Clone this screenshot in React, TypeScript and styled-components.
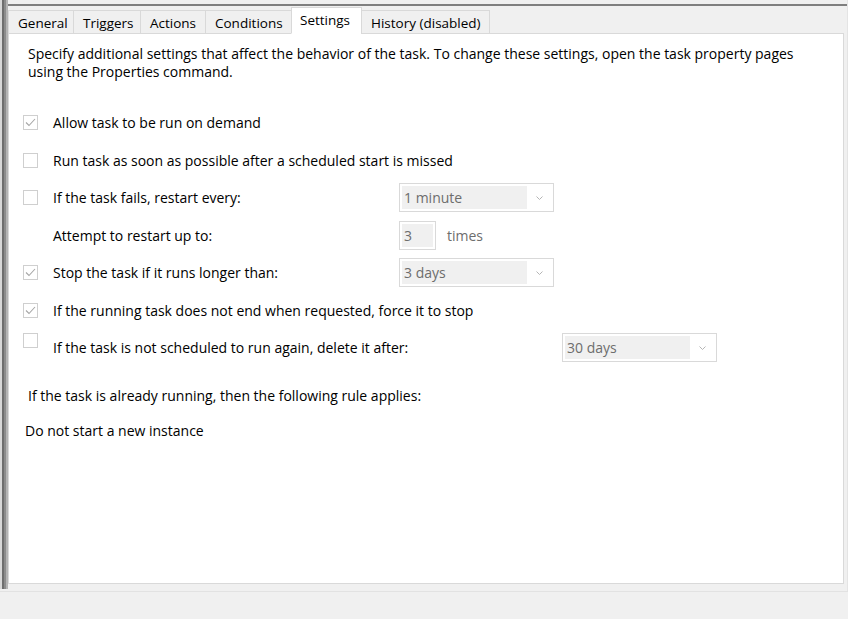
import React from 'react';
import styled, { createGlobalStyle } from 'styled-components';

const GlobalStyle = createGlobalStyle`
  html, body {
    margin: 0;
    padding: 0;
    background: #f0f0f0;
    overflow: hidden;
  }
  * {
    box-sizing: border-box;
  }
`;

const FONT = `"Open Sans", "Noto Sans", "Liberation Sans", sans-serif`;

const Window = styled.div`
  width: 848px;
  height: 619px;
  display: flex;
  flex-direction: column;
  background: #f0f0f0;
  font-family: ${FONT};
  font-size: 14px;
  color: #000;
`;

const Body = styled.div`
  display: flex;
  height: 592px;
  border-bottom: 1px solid #e2e2e2;
`;

const Gutter = styled.div`
  width: 8px;
  flex: none;
  background: linear-gradient(
    to right,
    #d8d8d8 0px,
    #d8d8d8 2px,
    #6e6e6e 2px,
    #6e6e6e 4px,
    #8c8c8c 4px,
    #8c8c8c 6px,
    #b4b4b4 6px,
    #b4b4b4 8px
  );
  margin-bottom: 2px;
`;

const Main = styled.div`
  flex: 1;
  display: flex;
  flex-direction: column;
  padding-right: 3px;
  padding-bottom: 7px;
  border-right: 1px solid #e4e4e4;
`;

const TopRule = styled.div`
  height: 7px;
  border-top: 4px solid #f0f0f0;
  background: linear-gradient(to bottom, #7f7f7f 0px, #7f7f7f 2px, #f0f0f0 2px);
  margin-right: -3px;
`;

const TabStrip = styled.div`
  display: flex;
  align-items: flex-end;
  height: 27px;
  position: relative;
  z-index: 1;
  margin-bottom: -1px;
`;

const Tab = styled.div<{ $w: number; $active?: boolean }>`
  width: ${p => p.$w}px;
  height: ${p => (p.$active ? 27 : 24)}px;
  display: flex;
  align-items: center;
  padding-left: ${p => (p.$active ? 8 : 9)}px;
  padding-top: ${p => (p.$active ? 0 : 2)}px;
  padding-bottom: ${p => (p.$active ? 2 : 0)}px;
  background: ${p => (p.$active ? '#ffffff' : '#f0f0f0')};
  border: 1px solid #d9d9d9;
  border-bottom: ${p => (p.$active ? '1px solid #ffffff' : '1px solid #d9d9d9')};
  margin-left: -1px;
  font-size: 13.5px;
  white-space: nowrap;
  &:first-child {
    margin-left: 0;
  }
`;

const Panel = styled.div`
  flex: 1;
  background: #fff;
  border: 1px solid #d9d9d9;
  padding: 11px 0 0 14px;
  display: flex;
  flex-direction: column;
`;

const Intro = styled.p`
  margin: 0 0 0 5px;
  width: 795px;
  line-height: 18px;
`;

const Options = styled.div`
  margin-top: 23px;
  display: flex;
  flex-direction: column;
`;

const Row = styled.div`
  height: 37.5px;
  display: flex;
  align-items: center;
`;

const Box = styled.span<{ $raised?: boolean }>`
  width: 15px;
  height: 15px;
  flex: none;
  border: 1px solid #cfcfcf;
  background: #fff;
  display: flex;
  align-items: center;
  justify-content: center;
  margin-right: 15px;
  transform: translateY(${p => (p.$raised ? -7 : 0)}px);
`;

const Spacer = styled.span`
  width: 30px;
  flex: none;
`;

const Label = styled.span<{ $w?: number }>`
  width: ${p => (p.$w ? `${p.$w}px` : 'auto')};
  flex: none;
  white-space: nowrap;
`;

const Combo = styled.div<{ $w: number }>`
  width: ${p => p.$w}px;
  height: 29px;
  border: 1px solid #d9d9d9;
  padding: 2px;
  display: flex;
  align-items: stretch;
`;

const ComboField = styled.div`
  flex: 1;
  background: #f0f0f0;
  color: #6d6d6d;
  display: flex;
  align-items: center;
  padding-left: 2px;
`;

const ComboArrow = styled.div`
  width: 24px;
  display: flex;
  align-items: center;
  justify-content: center;
`;

const Field = styled.div`
  width: 37px;
  height: 29px;
  border: 1px solid #d9d9d9;
  padding: 2px;
  display: flex;
`;

const FieldInner = styled.div`
  flex: 1;
  background: #f0f0f0;
  color: #6d6d6d;
  display: flex;
  align-items: center;
  padding-left: 2px;
`;

const Unit = styled.span`
  margin-left: 11px;
  color: #6d6d6d;
`;

const RuleText = styled.div<{ $indent: number; $top: number }>`
  margin-left: ${p => p.$indent}px;
  margin-top: ${p => p.$top}px;
  line-height: 18px;
`;

const Check = () => (
  <svg width="11" height="9" viewBox="0 0 11 9">
    <path d="M1 4.5 L4 7.5 L10 1" fill="none" stroke="#a6a6a6" strokeWidth="1.1" />
  </svg>
);

const Chevron = () => (
  <svg width="7" height="4" viewBox="0 0 7 4">
    <path d="M0.5 0.5 L3.5 3.5 L6.5 0.5" fill="none" stroke="#b5b5b5" strokeWidth="1" />
  </svg>
);

const CheckBox = ({ checked, raised }: { checked?: boolean; raised?: boolean }) => (
  <Box $raised={raised}>{checked && <Check />}</Box>
);

const Dropdown = ({ value, width }: { value: string; width: number }) => (
  <Combo $w={width}>
    <ComboField>{value}</ComboField>
    <ComboArrow>
      <Chevron />
    </ComboArrow>
  </Combo>
);

const tabs = [
  { name: 'General', w: 66 },
  { name: 'Triggers', w: 68 },
  { name: 'Actions', w: 66 },
  { name: 'Conditions', w: 87 },
  { name: 'Settings', w: 71, active: true },
  { name: 'History (disabled)', w: 129 },
];

export default function App() {
  return (
    <>
      <GlobalStyle />
      <Window>
        <Body>
          <Gutter />
          <Main>
            <TopRule />
            <TabStrip>
              {tabs.map(t => (
                <Tab key={t.name} $w={t.w} $active={t.active}>
                  {t.name}
                </Tab>
              ))}
            </TabStrip>
            <Panel>
              <Intro>
                Specify additional settings that affect the behavior of the task. To change these
                settings, open the task property pages using the Properties command.
              </Intro>
              <Options>
                <Row>
                  <CheckBox checked />
                  <Label>Allow task to be run on demand</Label>
                </Row>
                <Row>
                  <CheckBox />
                  <Label>Run task as soon as possible after a scheduled start is missed</Label>
                </Row>
                <Row>
                  <CheckBox />
                  <Label $w={346}>If the task fails, restart every:</Label>
                  <Dropdown value="1 minute" width={155} />
                </Row>
                <Row>
                  <Spacer />
                  <Label $w={346}>Attempt to restart up to:</Label>
                  <Field>
                    <FieldInner>3</FieldInner>
                  </Field>
                  <Unit>times</Unit>
                </Row>
                <Row>
                  <CheckBox checked />
                  <Label $w={346}>Stop the task if it runs longer than:</Label>
                  <Dropdown value="3 days" width={155} />
                </Row>
                <Row>
                  <CheckBox checked />
                  <Label>If the running task does not end when requested, force it to stop</Label>
                </Row>
                <Row>
                  <CheckBox raised />
                  <Label $w={509}>If the task is not scheduled to run again, delete it after:</Label>
                  <Dropdown value="30 days" width={155} />
                </Row>
              </Options>
              <RuleText $indent={5} $top={20}>
                If the task is already running, then the following rule applies:
              </RuleText>
              <RuleText $indent={2} $top={17}>
                Do not start a new instance
              </RuleText>
            </Panel>
          </Main>
        </Body>
      </Window>
    </>
  );
}
